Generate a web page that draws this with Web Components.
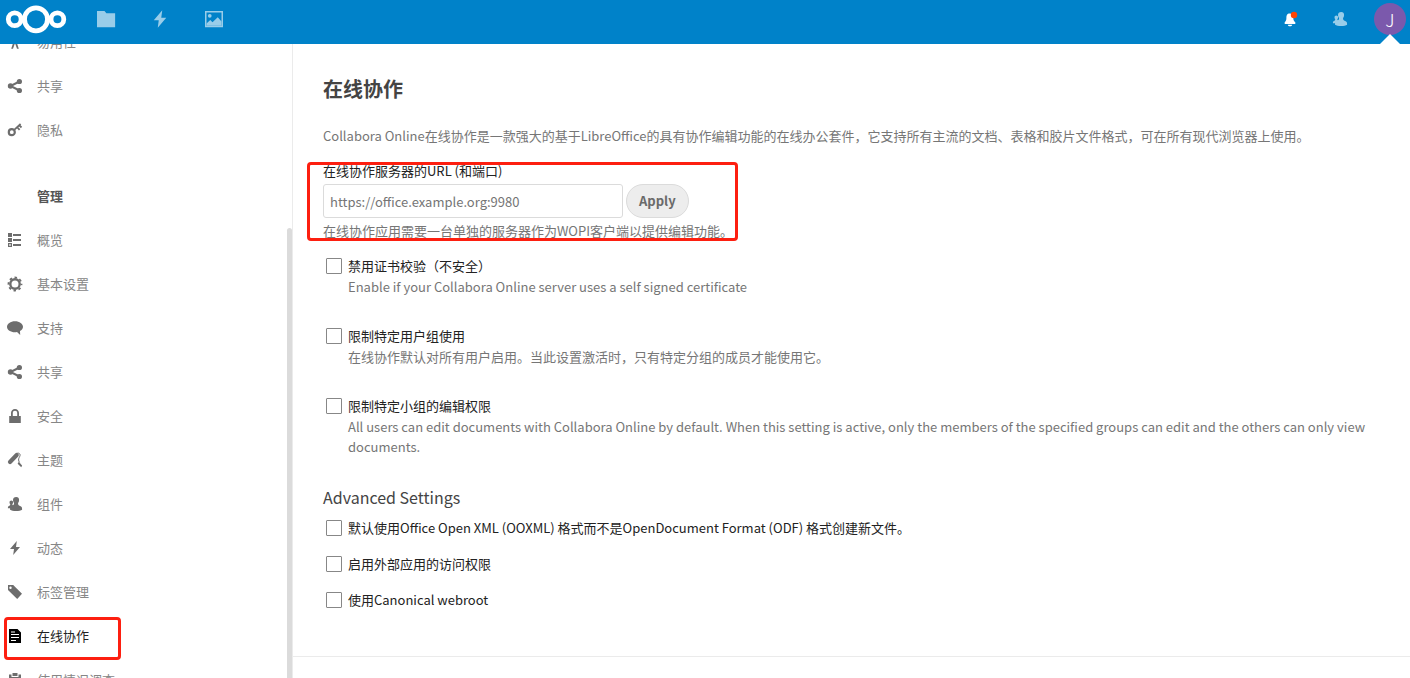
<!DOCTYPE html>
<html lang="zh-CN">
<head>
<meta charset="UTF-8">
<title>在线协作 - 设置</title>
<style>
      body {
        margin: 0;
        height: 100vh;
        overflow: hidden;
        display: flex;
        flex-direction: column;
        background-color: #fff;
        color: #222;
        font-family: "Noto Sans CJK SC", "Noto Sans", sans-serif;
        font-size: 13px;
        line-height: 20px;
      }

      .app {
        flex: 1;
        min-height: 0;
        display: flex;
      }
</style>
</head>
<body>
<template id="top-bar">
<style>
      :host {
        display: flex;
        align-items: center;
        justify-content: space-between;
        height: 44px;
        flex: none;
        background-color: #0082c9;
      }

      nav,
      .right {
        display: flex;
        height: 100%;
        align-items: center;
      }

      a,
      button {
        display: flex;
        align-items: center;
        justify-content: center;
        height: 38px;
        margin-bottom: 6px;
        padding: 0;
        border: 0;
        background: none;
        color: #fff;
      }

      .logo {
        width: 72px;
        margin-right: 7px;
      }

      .app-link {
        width: 54px;
      }

      .dim {
        opacity: .6;
      }

      .right button {
        width: 50px;
      }

      .right .user {
        position: relative;
        width: 40px;
        height: 44px;
        margin: 0 0 0 5px;
        padding-bottom: 6px;
      }

      .avatar {
        width: 32px;
        height: 32px;
        border-radius: 50%;
        background-color: #7b59ac;
        font: 300 18px/32px "Noto Sans CJK SC", sans-serif;
      }

      .user::after {
        content: '';
        position: absolute;
        bottom: 0;
        left: 10px;
        border: 10px solid transparent;
        border-top: 0;
        border-bottom-color: #fff;
      }
</style>
<nav aria-label="应用">
<a class="logo" href="#" aria-label="Nextcloud">
<svg width="62" height="30" viewBox="0 0 62 30" fill="none" stroke="#fff">
<circle cx="9.7" cy="15.3" r="6.4" stroke-width="4.8"/>
<circle cx="31" cy="15.3" r="11.5" stroke-width="4.8"/>
<circle cx="52.4" cy="15.3" r="6.4" stroke-width="4.8"/>
</svg>
</a>
<a class="app-link dim" href="#" aria-label="文件"><svg-icon name="folder" size="20"></svg-icon></a>
<a class="app-link dim" href="#" aria-label="动态"><svg-icon name="bolt" size="20"></svg-icon></a>
<a class="app-link dim" href="#" aria-label="图库"><svg-icon name="picture" size="20"></svg-icon></a>
</nav>
<div class="right">
<button aria-label="通知"><svg-icon name="bell" size="16"></svg-icon></button>
<button class="dim" aria-label="联系人"><svg-icon name="users" size="16"></svg-icon></button>
<button class="user" aria-label="用户菜单"><span class="avatar">J</span></button>
</div>
</template>

<template id="side-nav">
<style>
      :host {
        display: flex;
        width: 292px;
        flex: none;
        border-right: 1px solid #ebebeb;
      }

      nav {
        flex: 1;
        overflow: hidden;
      }

      .track {
        width: 5px;
        display: flex;
        flex-direction: column;
        justify-content: flex-end;
      }

      .thumb {
        height: 71%;
        border-radius: 3px 3px 0 0;
        background-color: #dbdbdb;
      }
</style>
<nav aria-label="设置"><slot></slot></nav>
<div class="track"><div class="thumb"></div></div>
</template>

<template id="nav-item">
<style>
      :host {
        display: block;
        position: relative;
      }

      a {
        display: flex;
        align-items: center;
        gap: 14px;
        height: 44px;
        padding-left: 7px;
        color: #868686;
        text-decoration: none;
      }

      svg-icon {
        color: #6d6d6d;
      }

      :host([active]) a {
        color: #222;
      }

      :host([active]) svg-icon {
        color: #000;
      }
</style>
<a href="#"><svg-icon size="16"></svg-icon><slot></slot></a>
<slot name="mark"></slot>
</template>

<template id="nav-heading">
<style>
      :host {
        display: block;
        margin-top: 22px;
      }

      h3 {
        margin: 0;
        padding-left: 37px;
        font-size: 13px;
        line-height: 44px;
        font-weight: 600;
        color: #555;
      }
</style>
<h3><slot></slot></h3>
</template>

<template id="red-mark">
<style>
      :host {
        position: absolute;
        inset: 3px auto -2px 4px;
        width: 111px;
        border: 3px solid #fd1f10;
        border-radius: 4px;
        pointer-events: none;
      }

      :host([wide]) {
        inset: 1px auto 0 -16px;
        width: 425px;
      }
</style>
</template>

<template id="server-form">
<style>
      :host {
        display: block;
        position: relative;
      }

      label {
        display: block;
        padding-bottom: 3px;
      }

      .row {
        display: flex;
        gap: 3px;
      }

      input {
        box-sizing: border-box;
        width: 300px;
        height: 34px;
        padding: 0 6px;
        border: 1px solid #dbdbdb;
        border-radius: 3px;
        font: inherit;
        color: #545454;
      }

      input::placeholder {
        color: #757575;
      }

      button {
        height: 34px;
        padding: 0 12px;
        border: 1px solid #dbdbdb;
        border-radius: 17px;
        background-color: #ededed;
        color: #6a6a6a;
        font: inherit;
        font-weight: 600;
      }

      p {
        margin: 3px 0 0;
        color: #767676;
      }
</style>
<label for="url">在线协作服务器的URL (和端口)</label>
<div class="row">
<input id="url" type="text" placeholder="https://office.example.org:9980">
<button>Apply</button>
</div>
<p>在线协作应用需要一台单独的服务器作为WOPI客户端以提供编辑功能。</p>
<red-mark wide></red-mark>
</template>

<template id="check-option">
<style>
      :host {
        display: block;
      }

      label {
        display: flex;
        align-items: center;
        gap: 6px;
        padding-left: 3px;
      }

      input {
        appearance: none;
        width: 16px;
        height: 16px;
        margin: 0;
        border: 1px solid #878787;
        border-radius: 1px;
        background-color: #fff;
      }

      input:checked {
        background-color: #0082c9;
      }

      p {
        margin: 1px 0 0;
        padding-left: 25px;
        color: #767676;
      }
</style>
<label><input type="checkbox"><slot></slot></label>
<p><slot name="hint"></slot></p>
</template>

<template id="settings-section">
<style>
      :host {
        display: block;
        flex: 1;
        min-width: 0;
        overflow: hidden;
      }

      section {
        padding: 30px 30px 46px;
        border-bottom: 1px solid #ebebeb;
      }

      h2 {
        margin: 0 0 22px;
        font-size: 20px;
        line-height: 30px;
        font-weight: bold;
        color: #444;
      }

      h3 {
        margin: 27px 0 8px;
        font-size: 16px;
        line-height: 26px;
        font-weight: 400;
        color: #444;
      }

      p {
        margin: 0 0 15px;
        color: #767676;
      }

      .options {
        display: flex;
        flex-direction: column;
        gap: 29px;
        margin-top: 15px;
      }

      .advanced {
        display: flex;
        flex-direction: column;
        gap: 16px;
      }
</style>
<section>
<h2>在线协作</h2>
<p>Collabora Online在线协作是一款强大的基于LibreOffice的具有协作编辑功能的在线办公套件，它支持所有主流的文档、表格和胶片文件格式，可在所有现代浏览器上使用。</p>
<server-form></server-form>
<div class="options"><slot name="options"></slot></div>
<h3>Advanced Settings</h3>
<div class="advanced"><slot name="advanced"></slot></div>
</section>
</template>

<top-bar></top-bar>
<div class="app">
<side-nav>
<nav-item icon="person">易用性</nav-item>
<nav-item icon="share">共享</nav-item>
<nav-item icon="key">隐私</nav-item>
<nav-heading>管理</nav-heading>
<nav-item icon="list">概览</nav-item>
<nav-item icon="gear">基本设置</nav-item>
<nav-item icon="comment">支持</nav-item>
<nav-item icon="share">共享</nav-item>
<nav-item icon="lock">安全</nav-item>
<nav-item icon="brush">主题</nav-item>
<nav-item icon="users">组件</nav-item>
<nav-item icon="bolt">动态</nav-item>
<nav-item icon="tag">标签管理</nav-item>
<nav-item icon="doc" active>在线协作<red-mark slot="mark"></red-mark></nav-item>
<nav-item icon="clipboard">使用情况调查</nav-item>
</side-nav>
<settings-section>
<check-option slot="options">禁用证书校验（不安全）<span slot="hint">Enable if your Collabora Online server uses a self signed certificate</span></check-option>
<check-option slot="options">限制特定用户组使用<span slot="hint">在线协作默认对所有用户启用。当此设置激活时，只有特定分组的成员才能使用它。</span></check-option>
<check-option slot="options">限制特定小组的编辑权限<span slot="hint">All users can edit documents with Collabora Online by default. When this setting is active, only the members of the specified groups can edit and the others can only view documents.</span></check-option>
<check-option slot="advanced">默认使用Office Open XML (OOXML) 格式而不是OpenDocument Format (ODF) 格式创建新文件。</check-option>
<check-option slot="advanced">启用外部应用的访问权限</check-option>
<check-option slot="advanced">使用Canonical webroot</check-option>
</settings-section>
</div>
<script>
// all icons share a 16x16 grid
const icons = {
  folder: '<path d="M.8 1.500h6l1.500 1.800h7v11.200H.8z"/>',
  bolt: '<path d="M9.800 1 3 9h4L6.200 15 13 7H9z"/>',
  picture: '<path fill-rule="evenodd" d="M.8 1.500h14.400v13H.8zM2 2.700v10.600h12V2.700z"/><circle cx="4.600" cy="5.400" r="1.500"/><path d="M2 13.300v-1.800l3-2.800 1.800 1.800L11 6.500l3 3.500v3.300z"/>',
  bell: '<path d="M7.700 2.500C5 2.500 4.400 4.500 4.400 7c0 2.200-.6 3.300-1.700 4.300V13h10.600v-1.700C12 10.300 11.300 9.200 11.300 7c0-2.500-.9-4.500-3.600-4.500zM5.800 13.800h4.400c-.3 2-4.100 2-4.400 0z"/><circle cx="12" cy="4" r="3.200" fill="#ff4402"/>',
  users: '<path d="M9.200 1C7.200 1 6 2.200 6 4c0 1.300.4 2.300 1 3 .2 1-.1 1.800-1 2.300-.6-.3-.7-.6-.6-1 .5-.6.7-1.100.7-2 0-1.100-.8-1.800-1.800-1.800S2.500 5.200 2.500 6.300c0 .9.300 1.500.7 2 .1.900-.2 1.300-1.300 1.700-.7.300-1 .7-1 2.200h2.200c-.1.500-.1 1 0 1.500 2 1.700 10 1.700 12 0 0-2.200-.3-3-1.500-3.500-1.700-.6-2.800-1.200-2.500-3.200.6-.7 1-1.700 1-3 0-1.800-.9-3-2.900-3z"/>',
  person: '<path d="M6.700 1h2.600v2.500H6.700zM2 4.500h12V6l-4 .8v2.400l1.800 5.600H10L8.300 10h-.6L6 14.800H4.200L6 9.200V6.800L2 6z"/>',
  share: '<path d="M12.500 3.500 3.500 8l9 4.500" fill="none" stroke="currentColor" stroke-width="2"/><circle cx="12.400" cy="3.500" r="2.600"/><circle cx="3.500" cy="8" r="2.700"/><circle cx="12.400" cy="12.500" r="2.600"/>',
  key: '<g fill="none" stroke="currentColor"><circle cx="4.800" cy="10.200" r="3" stroke-width="2.200"/><path d="M7.200 7.800 13.600 2M10 5l2.600 2.800M12.200 3.200l2.300 2.300" stroke-width="1.800"/></g>',
  list: '<path d="M1 1h4v4H1zM6 2h8v2H6zM1 6h4v4H1zM6 7h8v2H6zM6 12h8v2H6z"/><path d="M1.600 11.600h2.800v2.800H1.600z" fill="none" stroke="currentColor" stroke-width="1.200"/>',
  gear: '<g fill="none" stroke="currentColor"><circle cx="8" cy="8" r="4.700" stroke-width="2.400"/><circle cx="8" cy="8" r="6.500" stroke-width="1.800" stroke-dasharray="2.500 2.605" stroke-dashoffset="1.250"/></g>',
  comment: '<path d="M8 1.200c4.500 0 8 2.500 8 5.600 0 1.700-1.200 3.300-3 4.300l.2 4-3.200-3c-5 .9-10-1.500-10-5.300 0-3.100 3.500-5.600 8-5.600z"/>',
  lock: '<path fill-rule="evenodd" d="M8 1C5.600 1 4 2.700 4 5v3H2.200v7h11.600V8H12V5c0-2.300-1.600-4-4-4zm0 1.800c1.300 0 2.200.9 2.200 2.200v3H5.800V5c0-1.300.9-2.200 2.200-2.200z"/>',
  brush: '<path d="M3 10 9.700 3" fill="none" stroke="currentColor" stroke-width="4.200" stroke-linecap="round" stroke-linejoin="round"/><path d="M10.500 1c3.300.4 3 2.200 1.700 4.500-.9 1.800-.8 3.200.3 4.800" fill="none" stroke="currentColor"/><path d="m11.800 9.800 3.300 3.700-.8 1.700-3.700-3.400z"/>',
  tag: '<path fill-rule="evenodd" d="M1 1h5.200L15 9.700 10.200 15 1 6zM3.500 2.500a1.200 1.200 0 1 0 0 2.400 1.200 1.200 0 0 0 0-2.400z"/>',
  doc: '<path fill-rule="evenodd" d="M2 1h8.500L14 4.500V15H2zM4 3.500v1h4v-1zM4 6v1h8V6zM4 9v1h8V9zM4 12v1h5v-1z"/>',
  clipboard: '<path d="M5.500 1h5v3h-5zM2 2.500h2.500V5h7V2.500H14V15H2z"/>'
};

class BaseElement extends HTMLElement {
  connectedCallback() {
    if (this.shadowRoot) return;
    let shadowDom = this.attachShadow({ mode: "open" });
    let template = document.getElementById(this.localName);
    shadowDom.appendChild(template.content.cloneNode(true));
    this.init(shadowDom);
  }

  init() {}
}

class SvgIcon extends HTMLElement {
  connectedCallback() {
    if (this.shadowRoot) return;
    let size = this.getAttribute("size");
    this.attachShadow({ mode: "open" }).innerHTML = `
      <style>:host { display: flex; flex: none; }</style>
      <svg width="${size}" height="${size}" viewBox="0 0 16 16" fill="currentColor" aria-hidden="true">${icons[this.getAttribute("name")]}</svg>`;
  }
}

class NavItem extends BaseElement {
  init(root) {
    root.querySelector("svg-icon").setAttribute("name", this.getAttribute("icon"));
  }
}

class SideNav extends BaseElement {
  scrollList(top) {
    this.shadowRoot.querySelector("nav").scrollTop = top;
  }
}

class CheckOption extends BaseElement {
  init(root) {
    // options without a hint take a single line
    if (!this.querySelector("[slot=hint]")) root.querySelector("p").remove();
  }
}

customElements.define("nav-item", NavItem);
customElements.define("nav-heading", class extends BaseElement {});
customElements.define("red-mark", class extends BaseElement {});
customElements.define("side-nav", SideNav);
customElements.define("server-form", class extends BaseElement {});
customElements.define("check-option", CheckOption);
customElements.define("settings-section", class extends BaseElement {});
customElements.define("top-bar", class extends BaseElement {});
customElements.define("svg-icon", SvgIcon);

document.querySelector("side-nav").scrollList(24);
</script>
</body>
</html>
